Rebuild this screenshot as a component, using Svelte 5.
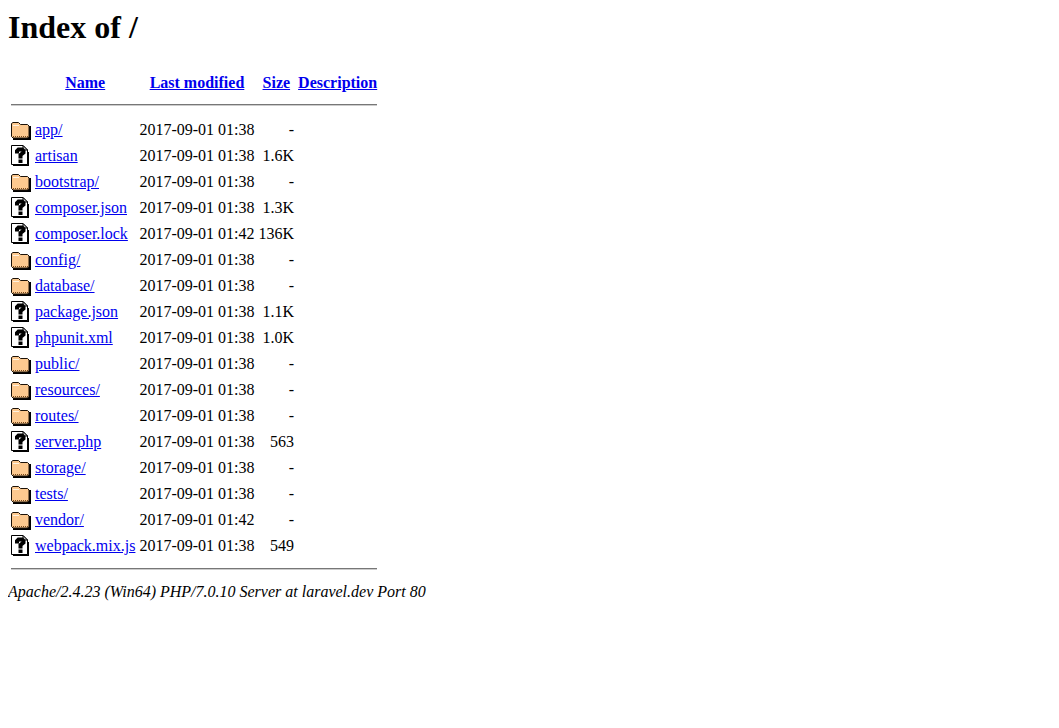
<script>
	const rows = [
		['app/', '2017-09-01 01:38', '-', true],
		['artisan', '2017-09-01 01:38', '1.6K', false],
		['bootstrap/', '2017-09-01 01:38', '-', true],
		['composer.json', '2017-09-01 01:38', '1.3K', false],
		['composer.lock', '2017-09-01 01:42', '136K', false],
		['config/', '2017-09-01 01:38', '-', true],
		['database/', '2017-09-01 01:38', '-', true],
		['package.json', '2017-09-01 01:38', '1.1K', false],
		['phpunit.xml', '2017-09-01 01:38', '1.0K', false],
		['public/', '2017-09-01 01:38', '-', true],
		['resources/', '2017-09-01 01:38', '-', true],
		['routes/', '2017-09-01 01:38', '-', true],
		['server.php', '2017-09-01 01:38', '563', false],
		['storage/', '2017-09-01 01:38', '-', true],
		['tests/', '2017-09-01 01:38', '-', true],
		['vendor/', '2017-09-01 01:42', '-', true],
		['webpack.mix.js', '2017-09-01 01:38', '549', false]
	];
</script>

<h1>Index of /</h1>
<table>
	<thead>
		<tr>
			<th class="head"></th>
			<th class="head"><a href="#name">Name</a></th>
			<th class="head"><a href="#modified">Last modified</a></th>
			<th class="head"><a href="#size">Size</a></th>
			<th class="head"><a href="#description">Description</a></th>
		</tr>
		<tr><th colspan="5" class="rule"><hr class="first" /></th></tr>
	</thead>
	<tbody>
		{#each rows as [name, modified, size, isDir]}
			<tr>
				<td class="icon-cell">
					{#if isDir}
						<svg width="20" height="22" viewBox="0 0 20 22" aria-hidden="true">
							<path d="M2 8H20V22H2Z" fill="#000" />
							<path d="M.5 7V5.500L2 4.500H7.500L9.500 6.500H16.500L18 8V18.500L16.500 20H2L.5 18.500Z" fill="#fdc98f" stroke="#1c1208" />
							<path d="M2 7.500H8" stroke="#fff3e2" fill="none" />
							<path d="M2 18.500H17" stroke="#7a4a1c" stroke-dasharray="1 1" fill="none" />
						</svg>
					{:else}
						<svg width="20" height="22" viewBox="0 0 20 22" aria-hidden="true">
							<path d="M2 8H18V22H2Z" fill="#000" />
							<path d="M.5 1.500H12L16.500 6V20.500H.5Z" fill="#fff" stroke="#000" />
							<path d="M12 1.500V6H16.500Z" fill="#c8c8c8" stroke="#000" />
							<path d="M6 9.500V7L7.500 5.500H11L12.500 7V8.500L9.500 11V14.500" fill="none" stroke="#000" stroke-width="4" />
							<rect x="7.500" y="15.500" width="4" height="3.500" fill="#000" />
						</svg>
					{/if}
				</td>
				<td><a href="#{name}">{name}</a></td>
				<td>{modified}</td>
				<td class="size">{size}</td>
				<td></td>
			</tr>
		{/each}
		<tr><th colspan="5" class="rule"><hr /></th></tr>
	</tbody>
</table>
<address>Apache/2.4.23 (Win64) PHP/7.0.10 Server at laravel.dev Port 80</address>

<style>
	:global(body) {
		margin: 8px;
		background: #fff;
		color: #000;
		font-family: 'Liberation Serif', 'Times New Roman', serif;
		font-size: 16px;
	}

	h1 {
		margin: 1px 0 22px;
		font-size: 32px;
		line-height: 37px;
		font-weight: bold;
	}

	table {
		border-collapse: separate;
		border-spacing: 2px;
	}

	th,
	td {
		padding: 1px;
	}

	.head {
		height: 19px;
		padding: 4px 1px 1px;
		vertical-align: top;
		font-weight: bold;
	}

	td {
		height: 19px;
		padding-top: 4px;
		vertical-align: top;
	}

	td.icon-cell {
		width: 20px;
		height: 22px;
		padding-top: 1px;
	}

	.icon-cell svg {
		display: block;
	}

	.size {
		text-align: right;
	}

	a {
		color: #00e;
		text-decoration: underline;
	}

	hr {
		margin: 8px 0;
		height: 0;
		border: 0;
		border-top: 1px solid #777;
		border-bottom: 1px solid #ccc;
	}

	hr.first {
		margin-top: 7px;
	}

	address {
		margin-top: 2px;
		font-style: italic;
	}
</style>
